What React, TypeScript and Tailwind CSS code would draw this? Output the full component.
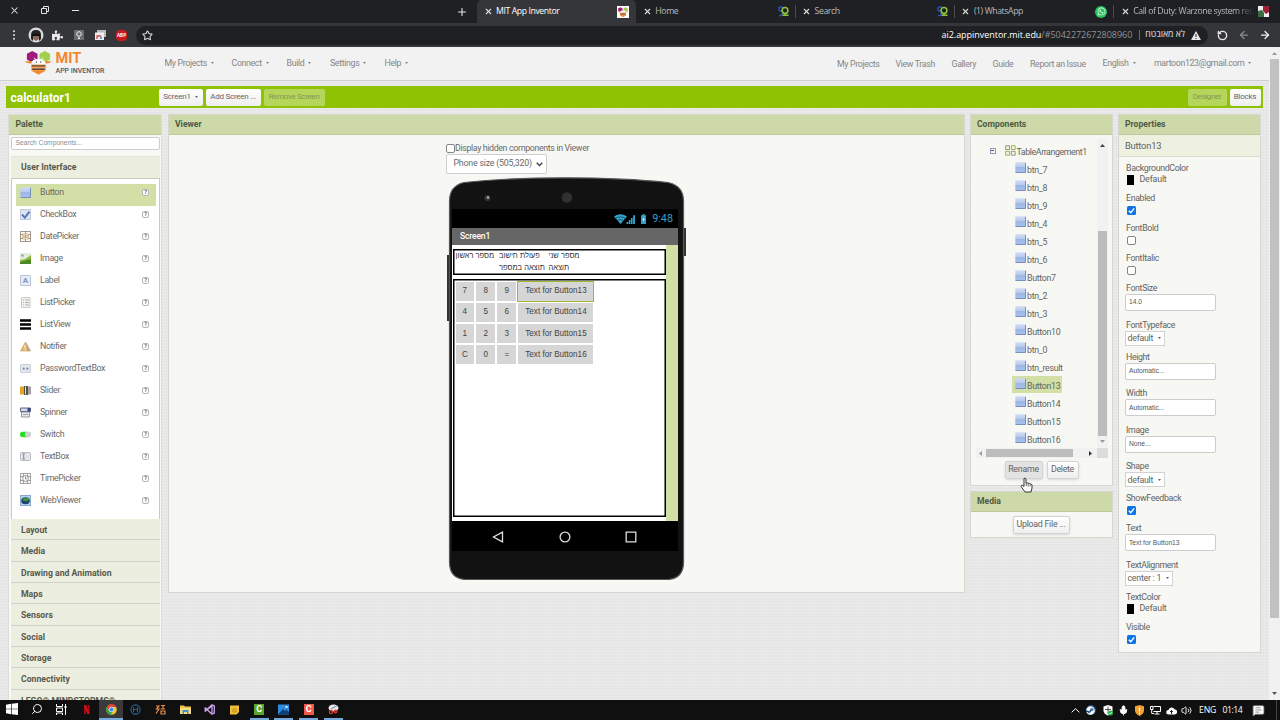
import type { ReactNode } from 'react'
import { ArrowLeft, ArrowRight, MessageSquareText, Mic, Minus, Plus, RotateCcw, Search, Star, Volume2, X } from 'lucide-react'
import { FaPuzzlePiece, FaSteam, FaWhatsapp } from 'react-icons/fa'

const paletteItems = [
  'Button', 'CheckBox', 'DatePicker', 'Image', 'Label', 'ListPicker', 'ListView', 'Notifier',
  'PasswordTextBox', 'Slider', 'Spinner', 'Switch', 'TextBox', 'TimePicker', 'WebViewer',
]

const drawers = [
  'Layout', 'Media', 'Drawing and Animation', 'Maps', 'Sensors', 'Social', 'Storage', 'Connectivity', 'LEGO® MINDSTORMS®',
]

const treeItems = [
  'btn_7', 'btn_8', 'btn_9', 'btn_4', 'btn_5', 'btn_6', 'Button7', 'btn_2', 'btn_3', 'Button10',
  'btn_0', 'btn_result', 'Button13', 'Button14', 'Button15', 'Button16',
]

type Property = { label: string; kind: 'color' | 'check' | 'input' | 'select'; value?: string; checked?: boolean }

const properties: Property[] = [
  { label: 'BackgroundColor', kind: 'color', value: 'Default' },
  { label: 'Enabled', kind: 'check', checked: true },
  { label: 'FontBold', kind: 'check' },
  { label: 'FontItalic', kind: 'check' },
  { label: 'FontSize', kind: 'input', value: '14.0' },
  { label: 'FontTypeface', kind: 'select', value: 'default' },
  { label: 'Height', kind: 'input', value: 'Automatic...' },
  { label: 'Width', kind: 'input', value: 'Automatic...' },
  { label: 'Image', kind: 'input', value: 'None...' },
  { label: 'Shape', kind: 'select', value: 'default' },
  { label: 'ShowFeedback', kind: 'check', checked: true },
  { label: 'Text', kind: 'input', value: 'Text for Button13' },
  { label: 'TextAlignment', kind: 'select', value: 'center : 1' },
  { label: 'TextColor', kind: 'color', value: 'Default' },
  { label: 'Visible', kind: 'check', checked: true },
]

const keypad = [
  ['7', '8', '9', 'Text for Button13'],
  ['4', '5', '6', 'Text for Button14'],
  ['1', '2', '3', 'Text for Button15'],
  ['C', '0', '=', 'Text for Button16'],
]

function BeeLogo({ className }: { className: string }) {
  return (
    <svg className={className} viewBox="0 0 30 25">
      <path d="M3 3.500L8.500.5l5.500 3v5.500l-3 3.500H8L3 9.500z" fill="#a01a7d" />
      <path d="M16 3.500L21.500.5l5.500 3v6l-5 3h-3l-3-3.500z" fill="#a3cf4d" />
      <path d="M.5 11.500l9-.5 1 3-7-1zM29 11.500l-8.500-.5-1 3 6.500-1z" fill="#f4872e" />
      <path d="M7.500 14.500q0-5.500 7.500-5.500t7.500 5.500z" fill="#fff" />
      <path d="M12 9.500L10.500 7.500M18 9.500l1.500-2" stroke="#fff" strokeWidth="1" />
      <circle cx="12.700" cy="12" r=".7" fill="#444" />
      <circle cx="17.300" cy="12" r=".7" fill="#444" />
      <path d="M7.500 14.500h15v6.500L15 24.800 7.500 21z" fill="#f4a15e" />
      <path d="M8 16h14M8.500 19.500h13" stroke="#5b4636" strokeWidth="1.400" />
      <path d="M8.500 21h13L15 24.800z" fill="#f4872e" />
    </svg>
  )
}

function SearchSiteIcon() {
  return (
    <svg className="h-[11px] w-[11px]" viewBox="0 0 11 11" fill="none">
      <path d="M5 1H2.500Q.8 1 .8 3T3 5t1.700 2T3 9.500H1" stroke="#2b4fc0" strokeWidth="1.400" />
      <circle cx="7" cy="4.500" r="2.900" stroke="#8fc43a" strokeWidth="1.500" />
      <path d="M4.500 9.300h6M7 7.500v2" stroke="#8fc43a" strokeWidth="1.500" />
    </svg>
  )
}

function Tab({ title, icon, active, last }: { title: string; icon: ReactNode; active?: boolean; last?: boolean }) {
  return (
    <div
      className={`flex w-[159.300px] shrink-0 items-center pr-[7px] pl-[6.500px] ${
        active ? 'rounded-t-[5px] bg-[#35363a] text-white' : 'text-[#b9babd]'
      }`}
    >
      <X className="h-[9px] w-[9px] shrink-0 text-[#dcdcdc]" strokeWidth={3} />
      <span
        className={`ml-[3.500px] flex-1 text-[8.700px] tracking-[-0.4px] whitespace-nowrap ${
          last ? '[mask-image:linear-gradient(90deg,#000_85%,transparent)]' : ''
        }`}
      >
        {title}
      </span>
      <span className="ml-[4px] shrink-0">{icon}</span>
    </div>
  )
}

function BrowserChrome() {
  return (
    <div className="h-[47px] shrink-0 bg-[#1f2023] font-['Open_Sans','Noto_Sans',sans-serif]">
      <div className="flex h-[23px]">
        <div className="flex w-[477px] shrink-0 items-center pb-[3px] text-[#e3e3e3]">
          <X className="ml-[9px] h-[11px] w-[11px]" strokeWidth={2.200} />
          <svg className="ml-[21px] h-[8px] w-[8px]" viewBox="0 0 8 8" fill="none" stroke="currentColor">
            <path d="M.5 2.500h5v5h-5zM2.500 2.500v-2h5v5h-2" />
          </svg>
          <Minus className="ml-[21px] h-[11px] w-[11px]" strokeWidth={2.200} />
          <Plus className="mt-[3px] ml-[375px] h-[12px] w-[12px] shrink-0" strokeWidth={2.200} />
        </div>
        <Tab
          title="MIT App Inventor"
          active
          icon={<span className="block h-[12px] w-[12px] bg-white"><BeeLogo className="h-[12px] w-[12px]" /></span>}
        />
        <Tab title="Home" icon={<SearchSiteIcon />} />
        <div className="my-[5px] -ml-px w-px bg-[#4b4c50]" />
        <Tab title="Search" icon={<SearchSiteIcon />} />
        <div className="my-[5px] -ml-px w-px bg-[#4b4c50]" />
        <Tab
          title="(1) WhatsApp"
          icon={
            <span className="flex h-[12px] w-[12px] items-center justify-center rounded-full bg-[#25c35a] text-white">
              <FaWhatsapp className="h-[9px] w-[9px]" />
            </span>
          }
        />
        <div className="my-[5px] -ml-px w-px bg-[#4b4c50]" />
        <Tab
          title="Call of Duty: Warzone system req"
          last
          icon={
            <svg className="h-[11px] w-[11px]" viewBox="0 0 11 11">
              <path d="M0 0h11v11H0z" fill="#eee" />
              <path d="M5 0h6v6L8 8 5 5z" fill="#9b2038" />
              <path d="M0 5l4-1 2 3v4H0z" fill="#3d6b43" />
            </svg>
          }
        />
      </div>
      <div className="flex h-[24px] items-center bg-[#35363a]">
        <div className="flex w-[136px] shrink-0 items-center">
          <svg className="ml-[12px] h-[10px] w-[4px]" viewBox="0 0 4 10" fill="#e3e3e3">
            <circle cx="2" cy="1.300" r="1" />
            <circle cx="2" cy="5" r="1" />
            <circle cx="2" cy="8.700" r="1" />
          </svg>
          <svg className="ml-[12px] h-[16px] w-[16px]" viewBox="0 0 16 16">
            <circle cx="8" cy="8" r="7.500" fill="#d8d8d8" />
            <path d="M3 8q0-5 5-5t5 5v4l-2 2V9H5v5l-2-2z" fill="#222" />
            <path d="M5 8h6v4l-3 2-3-2z" fill="#8c6a58" />
            <path d="M4 7h8v2H4z" fill="#111" />
          </svg>
          <FaPuzzlePiece className="ml-[8px] h-[11px] w-[11px] text-[#e8e8e8]" />
          <svg className="ml-[11px] h-[10px] w-[10px]" viewBox="0 0 10 10">
            <path d="M0 0h10v10H0z" fill="#6b6c6f" />
            <circle cx="5" cy="4" r="2.300" fill="none" stroke="#eee" />
            <path d="M4 7.500h2v1.500H4z" fill="#eee" />
          </svg>
          <svg className="ml-[11px] h-[10px] w-[11px]" viewBox="0 0 11 10">
            <path d="M2 0h9v7H2z" fill="#b9b9b9" />
            <path d="M0 2.500h9V10H0z" fill="#eee" />
            <path d="M2 9V6h4" stroke="#d04a3c" strokeWidth="1.300" fill="none" />
            <path d="M6 6.500V9" stroke="#3f7de0" strokeWidth="1.500" />
          </svg>
          <div className="ml-[10px] flex h-[11px] w-[11px] items-center justify-center rounded-[4px] bg-[#c91a1f] text-[4.500px] font-bold text-white">
            ABP
          </div>
        </div>
        <div className="flex h-[19px] w-[1072px] shrink-0 items-center rounded-full bg-[#1f2023]">
          <Star className="ml-[6px] h-[11px] w-[11px] text-[#dedede]" strokeWidth={2.200} />
          <div className="ml-auto text-[9px] tracking-[-0.03px] text-white">
            ai2.appinventor.mit.edu<span className="text-[#919397]">/#5042272672808960</span>
          </div>
          <div className="mr-[5px] ml-[7px] h-[10px] w-px bg-[#6a6b6e]" />
          <div dir="rtl" className="text-[8.700px] text-[#e3e3e3] font-['Open_Sans','DejaVu_Sans',sans-serif]">לא מאובטח</div>
          <svg className="mr-[7px] ml-[6px] h-[9px] w-[10px]" viewBox="0 0 10 9">
            <path d="M5 0l5 9H0z" fill="#e8e8e8" />
            <path d="M5 3v3M5 7v1" stroke="#1f2023" strokeWidth="1" />
          </svg>
        </div>
        <RotateCcw className="ml-[9px] h-[11px] w-[11px] text-[#e8e8e8]" strokeWidth={3} />
        <ArrowLeft className="ml-[10px] h-[12px] w-[12px] text-[#8a8b8e]" strokeWidth={2.500} />
        <ArrowRight className="ml-[9px] h-[12px] w-[12px] text-[#f2f2f2]" strokeWidth={2.500} />
      </div>
    </div>
  )
}

function Caret({ className = '' }: { className?: string }) {
  return (
    <svg className={`inline-block h-[2px] w-[3px] ${className}`} viewBox="0 0 3 2">
      <path d="M0 0h3L1.500 2z" fill="currentColor" />
    </svg>
  )
}

function TopNav() {
  const left = [
    { name: 'My Projects', w: 'w-[67px]' },
    { name: 'Connect', w: 'w-[55px]' },
    { name: 'Build', w: 'w-[43.500px]' },
    { name: 'Settings', w: 'w-[54.500px]' },
    { name: 'Help', w: 'w-[40px]' },
  ]
  const right = [
    { name: 'My Projects', w: 'w-[58.500px]' },
    { name: 'View Trash', w: 'w-[56px]' },
    { name: 'Gallery', w: 'w-[41px]' },
    { name: 'Guide', w: 'w-[37.500px]' },
    { name: 'Report an Issue', w: 'w-[72.500px]' },
  ]
  return (
    <div className="flex h-[34px] shrink-0 items-center border-b border-[#cfcfcf] bg-[#f2f2f2] text-[8.800px] tracking-[-0.35px] whitespace-nowrap text-[#858585]">
      <BeeLogo className="mb-[3px] ml-[24px] h-[25px] w-[29px]" />
      <div className="ml-[2.500px] w-[109px] font-bold tracking-normal">
        <div className="text-[14.500px] leading-[12px] text-[#f4872e]">MIT</div>
        <div className="pt-[2px] text-[7px] leading-[8px] font-medium text-[#555]">APP INVENTOR</div>
      </div>
      {left.map((m) => (
        <div key={m.name} className={`${m.w} shrink-0`}>
          {m.name}<Caret className="mb-[2px] ml-[4px]" />
        </div>
      ))}
      <div className="ml-auto flex pt-[2px]">
        {right.map((m) => (
          <div key={m.name} className={`${m.w} shrink-0`}>{m.name}</div>
        ))}
      </div>
      <div className="w-[51.500px]">English<Caret className="mb-[2px] ml-[4px]" /></div>
      <div className="w-[115px]">martoon123@gmail.com<Caret className="mb-[2px] ml-[4px]" /></div>
    </div>
  )
}

function ProjectBar() {
  const button = 'flex h-[17px] items-center justify-center rounded-[2px] text-[8px] whitespace-nowrap'
  return (
    <div className="mx-[6px] mt-[5px] flex h-[22px] shrink-0 items-center bg-[#8fc202]">
      <div className="w-[152.500px] pt-[2px] pl-[4.500px] text-[12px] font-bold text-white">calculator1</div>
      <div className={`${button} w-[44px] bg-gradient-to-b from-white to-[#eee] tracking-[-0.2px] text-[#666]`}>
        Screen1<Caret className="ml-[4px]" />
      </div>
      <div className={`${button} ml-[3px] w-[55px] bg-gradient-to-b from-white to-[#eee] tracking-[-0.25px] text-[#666]`}>Add Screen ...</div>
      <div className={`${button} ml-[3px] w-[61px] bg-[#b5d65b] tracking-[-0.35px] text-[#84984f]`}>Remove Screen</div>
      <div className={`${button} ml-auto w-[39px] bg-[#b5d65b] tracking-[-0.35px] text-[#84984f]`}>Designer</div>
      <div className={`${button} mr-[2.500px] ml-[3px] w-[31px] bg-gradient-to-b from-white to-[#eee] tracking-[-0.25px] text-[#666]`}>Blocks</div>
    </div>
  )
}

function BoxHeader({ title }: { title: string }) {
  return (
    <div className="h-[21px] shrink-0">
      <div className="flex h-[20px] items-center border-b border-[#bfc99c] bg-[#cdd9a8] pl-[6.500px] text-[8.600px] font-bold tracking-normal text-[#505a45]">
        {title}
      </div>
    </div>
  )
}

function ButtonGlyph() {
  return (
    <svg className="block h-[11px] w-[11px] shrink-0" viewBox="0 0 11 11">
      <defs>
        <linearGradient id="blueButton" x1="0" y1="0" x2="0" y2="1">
          <stop offset="0" stopColor="#cfdcf5" />
          <stop offset=".45" stopColor="#b6caee" />
          <stop offset=".5" stopColor="#9db7e6" />
          <stop offset="1" stopColor="#a9c0ea" />
        </linearGradient>
      </defs>
      <rect x=".3" y=".3" width="10.400" height="10.400" rx="1" fill="url(#blueButton)" />
      <path d="M.5 10.500h10V.8" fill="none" stroke="#7089b6" strokeWidth=".9" />
    </svg>
  )
}

function PaletteIcon({ name }: { name: string }) {
  if (name === 'Button') return <ButtonGlyph />
  const art: Record<string, ReactNode> = {
    CheckBox: (
      <>
        <rect x=".5" y=".5" width="10" height="10" fill="#dde5f2" stroke="#c3cbda" />
        <path d="M2 5.500l2.800 3.200 4.700-6" fill="none" stroke="#5878b8" strokeWidth="1.900" />
      </>
    ),
    DatePicker: (
      <>
        <path d="M.5.5h10v10H.5zM.5 3.500h10M5.500.5v10M.5 7.500h10" fill="#fffaf2" stroke="#776c60" strokeWidth=".7" />
        <path d="M2.500 3h6v5h-6z" fill="#f7ead6" stroke="#b8966c" strokeWidth=".6" />
        <path d="M4 4v3M5.500 4v3M7 4v3" stroke="#8a7860" strokeWidth=".6" />
      </>
    ),
    Image: (
      <>
        <path d="M0 0h11v11H0z" fill="#e4ebdf" />
        <path d="M0 7l5-1 6-4v9H0z" fill="#8dbb45" />
        <path d="M0 9l11-3v5H0z" fill="#4d8724" />
        <circle cx="2.500" cy="2.500" r="1.300" fill="#9aa79a" />
      </>
    ),
    Label: (
      <>
        <rect x=".5" y=".5" width="10" height="10" rx=".5" fill="#e6ecf5" stroke="#b9c4d6" />
        <text x="5.500" y="8.400" textAnchor="middle" fontSize="8" fontWeight="bold" fill="#7f96bd">A</text>
      </>
    ),
    ListPicker: (
      <>
        <rect x="1.500" y=".5" width="8.500" height="10" rx=".5" fill="#f3f3f0" stroke="#bcbcb8" strokeWidth=".8" />
        <path d="M3 3h1M5 3h4M3 5.500h1M5 5.500h4M3 8h1M5 8h4" stroke="#aaa9a2" strokeWidth=".9" />
      </>
    ),
    ListView: <path d="M0 1.500h11M0 5.500h11M0 9.500h11" stroke="#000" strokeWidth="2.300" />,
    Notifier: (
      <>
        <path d="M5.500 1l5 9H.5z" fill="#e9b667" stroke="#c99750" strokeWidth=".6" />
        <path d="M6 1.500L10.500 10H7z" fill="#b5a68d" />
        <path d="M5 4v3.500M5 8.300v1" stroke="#fff3d0" strokeWidth="1" />
      </>
    ),
    PasswordTextBox: (
      <>
        <rect x=".5" y="1.500" width="10" height="8" rx=".5" fill="#e4e8ee" stroke="#cbd0d8" />
        <circle cx="3.700" cy="5.700" r="1.100" fill="#7688a8" />
        <circle cx="7.400" cy="5.700" r="1.100" fill="#7688a8" />
      </>
    ),
    Slider: (
      <>
        <path d="M0 1.500h4v8H0z" fill="#e5a526" />
        <path d="M4 1h4v9H4z" fill="#55524c" />
        <path d="M5 1.500h1v8H5z" fill="#ddd" />
        <path d="M8 1.500h3v8H8z" fill="#a4a29c" />
      </>
    ),
    Spinner: (
      <>
        <path d="M.5 1h10v3.500H.5z" fill="#d4d9e4" stroke="#4c5a7c" strokeWidth=".9" />
        <path d="M7.500 1h3v3.500h-3z" fill="#33477c" />
        <path d="M1.500 5h8v5h-8z" fill="#e6e8ec" stroke="#7c8494" strokeWidth=".8" />
        <path d="M3 7.500h5" stroke="#9aa1af" />
      </>
    ),
    Switch: (
      <>
        <rect x="0" y="2.800" width="9" height="5.500" rx="2.700" fill="#1fdf1f" />
        <circle cx="8" cy="5.500" r="3.100" fill="#cfcfcf" />
      </>
    ),
    TextBox: (
      <>
        <rect x=".5" y="1.500" width="10" height="8" rx="1" fill="#e3e5e9" stroke="#b7bac0" />
        <path d="M2.500 3h2.400M2.500 8h2.400M3.700 3v5" stroke="#6e7480" strokeWidth=".8" />
      </>
    ),
    TimePicker: (
      <>
        <path d="M.5.5h10v10H.5zM.5 3.500h10M3.500.5v10M7.500.5v10M.5 7.500h10" fill="#fafafa" stroke="#7f7f7f" strokeWidth=".7" />
        <circle cx="5.500" cy="5.500" r="2.900" fill="#fff" stroke="#666" strokeWidth=".7" />
        <path d="M5.500 3.800v2h1.300" fill="none" stroke="#555" strokeWidth=".7" />
      </>
    ),
    WebViewer: (
      <>
        <rect x=".5" y=".5" width="10" height="10" fill="#b9d1ee" stroke="#8aa8cf" />
        <ellipse cx="5.500" cy="5.700" rx="4.300" ry="3.500" fill="#1d466c" />
        <path d="M2 5q2-3 5-2.500t2.500 2.500L6 6.500z" fill="#3f9340" />
      </>
    ),
  }
  return <svg className="block h-[11px] w-[11px] shrink-0" viewBox="0 0 11 11">{art[name]}</svg>
}

function Palette() {
  return (
    <div className="flex h-[587px] w-[154px] shrink-0 flex-col border border-[#dcdcd8] bg-[#f8f9f5] text-[8.800px] text-[#6a6a6a]">
      <BoxHeader title="Palette" />
      <div className="mx-[1.500px] mt-px flex h-[13px] shrink-0 items-center rounded-[2px] border border-[#ccc] bg-white pl-[4px] font-['Liberation_Sans',sans-serif] text-[6.700px] text-[#8c8c8c]">
        Search Components...
      </div>
      <div className="mx-[1.500px] mt-[6px] flex h-[23px] shrink-0 items-center border-t border-b border-[#c9cbc0] border-t-[#e3e5da] bg-[#ecefdf] pt-px pl-[10.500px] text-[8.700px] font-bold text-[#58594f]">
        User Interface
      </div>
      <div className="mx-[1.500px] h-[340px] shrink-0 border-x border-[#c9c9c9] bg-white pt-[5px] pr-[2.500px] pl-[4.500px]">
        {paletteItems.map((name, i) => (
          <div key={name} className={`flex h-[22px] items-start pl-[4px] ${i === 0 ? 'bg-[#d2dfa6]' : ''}`}>
            <span className="pt-[3px]"><PaletteIcon name={name} /></span>
            <span className="ml-[9px] pt-[1.500px] leading-[13px] tracking-[-0.35px]">{name}</span>
            <span className="mt-[5px] mr-[7px] ml-auto flex h-[7px] w-[7px] items-center justify-center rounded-[2px] border border-[#b5b5b5] bg-white text-[5.500px] leading-none font-bold text-[#666]">
              ?
            </span>
          </div>
        ))}
      </div>
      <div className="mx-[1.500px] min-h-0 flex-1 overflow-hidden">
        {drawers.map((name) => (
          <div key={name} className="flex h-[21.330px] items-center border-b-[1.500px] border-[#cfd1ca] bg-[#ecefdf] pt-[3px] pl-[10.500px] text-[8.700px] font-bold text-[#58594f]">
            {name}
          </div>
        ))}
      </div>
    </div>
  )
}

function Phone() {
  return (
    <div className="relative ml-[278.500px] h-[403px] w-[239px] pt-[32px] pl-[5px] tracking-normal">
      {/* device body with the side keys */}
      <svg className="absolute inset-0 h-[403px] w-[239px]" viewBox="0 0 239 403">
        <path d="M0 78h3v66H0zM236 51h3v28h-3z" fill="#333" />
        <path d="M2.500 24Q2.500 9 17 5.500 60 .8 119 .8T221 5.500Q236.500 9 236.500 24V385Q236.500 402.500 219 402.500H20Q2.500 402.500 2.500 385z" fill="#121212" stroke="#55585a" strokeWidth="1.200" />
        <circle cx="40.500" cy="21" r="3" fill="#34383c" />
        <circle cx="41" cy="20.500" r="1.200" fill="#a8afb5" />
        <circle cx="120" cy="20.500" r="5.300" fill="#303030" />
      </svg>
      <div className="relative w-[226px] bg-black">
        <div className="flex h-[19px] items-center justify-end pr-[5px] text-[#33a1c9]">
          <svg className="h-[10px] w-[34px]" viewBox="0 0 34 10" fill="#33a1c9">
            <path d="M0 2.500Q6.500-2 13 2.500L6.500 10z" />
            <path d="M1.500 4.500Q6.500 1.200 11.500 4.500M3.300 6.500q3.200-2 6.400 0" fill="none" stroke="#0b2e3b" strokeWidth=".6" />
            <path d="M12.500 10h1.700V8h-1.700zM14.700 10h1.700V6h-1.700zM16.900 10h1.700V4h-1.700zM19.100 10H21V1.200h-1.900z" />
            <path d="M27 1.200h1.500V0h2v1.200H32V10h-5z" />
            <path d="M29.800 3l-1.300 3h1l-.3 2 1.500-3h-1z" fill="#fff" />
          </svg>
          <span className="ml-[4px] pt-px text-[10.800px] leading-none">9:48</span>
        </div>
        <div className="flex h-[17px] items-center bg-[#666] pb-px pl-[8px] text-[8.600px] font-medium tracking-[-0.2px] text-white">Screen1</div>
        <div className="flex h-[276px] bg-[#d2dfa6]">
          <div className="w-[214px] bg-white pt-[4px] pl-px">
            <div className="grid h-[26px] grid-cols-[43.500px_49.500px_auto] grid-rows-[12px_12px] border border-black pl-[1.500px] font-['Liberation_Sans','DejaVu_Sans',sans-serif] text-[7.500px] leading-[12px] whitespace-nowrap text-[#333] shadow-[inset_0_0_0_0.500px_#000]">
              <span>מספר ראשון</span>
              <span>פעולת חישוב</span>
              <span>מספר שני</span>
              <span className="col-start-2">תוצאה במספר</span>
              <span>תוצאה</span>
            </div>
            <div className="mt-[4px] flex h-[238px] flex-col gap-[2.330px] border border-black pt-[1.500px] pl-[1.500px] font-['Liberation_Sans',sans-serif] text-[8.150px] text-[#444] shadow-[inset_0_0_0_0.500px_#000]">
              {keypad.map((row) => (
                <div key={row[3]} className="flex h-[19px] gap-[2.300px] whitespace-nowrap">
                  {row.map((key) => (
                    <div
                      key={key}
                      className={`flex items-center justify-center bg-[#d6d6d6] ${key.length > 1 ? 'w-[75px]' : 'w-[18.700px]'} ${
                        key === 'Text for Button13' ? 'shadow-[0_0_0_1px_#9cba2e]' : ''
                      }`}
                    >
                      {key}
                    </div>
                  ))}
                </div>
              ))}
            </div>
          </div>
        </div>
        <div className="flex h-[30px] items-center justify-between pt-[2px] pr-[41px] pl-[40px]">
          <svg className="h-[12px] w-[12px]" viewBox="0 0 12 12" fill="none" stroke="#ddd" strokeWidth="1.300">
            <path d="M10.500 1.200v9.600L1.500 6z" />
          </svg>
          <svg className="h-[12px] w-[12px]" viewBox="0 0 12 12" fill="none" stroke="#ddd" strokeWidth="1.300">
            <circle cx="6" cy="6" r="4.900" />
          </svg>
          <svg className="h-[12px] w-[12px]" viewBox="0 0 12 12" fill="none" stroke="#ddd" strokeWidth="1.300">
            <path d="M1.200 1.200h9.600v9.600H1.200z" />
          </svg>
        </div>
      </div>
    </div>
  )
}

function Viewer() {
  return (
    <div className="ml-[5.500px] h-[479px] w-[797px] shrink-0 border border-[#d6d8cf] bg-[#f7f8f3] text-[8.800px] tracking-[-0.35px] text-[#6a6a6a]">
      <BoxHeader title="Viewer" />
      <div className="mt-[6px] ml-[277.500px] flex h-[12px] items-center">
        <Checkbox />
        <span className="pt-px whitespace-nowrap">Display hidden components in Viewer</span>
      </div>
      <div className="mb-[3px] ml-[277.500px] flex h-[20px] w-[101px] items-center justify-between rounded-[2px] border border-[#d0d0d0] bg-white pr-[3px] pl-[6.500px] tracking-[-0.2px] whitespace-nowrap">
        Phone size (505,320)
        <svg className="h-[5px] w-[7px]" viewBox="0 0 7 5" fill="none" stroke="#444" strokeWidth="1.400">
          <path d="M.7.8l2.800 2.800L6.300.8" />
        </svg>
      </div>
      <Phone />
    </div>
  )
}

function Checkbox({ checked }: { checked?: boolean }) {
  if (!checked) {
    return <span className="block h-[9px] w-[9px] shrink-0 rounded-[2px] border border-[#858585] bg-white" />
  }
  return (
    <svg className="block h-[9px] w-[9px] shrink-0" viewBox="0 0 9 9">
      <rect width="9" height="9" rx="1.500" fill="#0d74e7" />
      <path d="M1.800 4.700l2 1.900 3.400-4.200" fill="none" stroke="#fff" strokeWidth="1.400" />
    </svg>
  )
}

function ArrowGlyph({ className = '' }: { className?: string }) {
  return (
    <svg className={`h-[3px] w-[5px] shrink-0 ${className}`} viewBox="0 0 5 3">
      <path d="M0 3h5L2.500 0z" fill="currentColor" />
    </svg>
  )
}

function Components() {
  const button = 'flex h-[18px] items-center justify-center rounded-[2px] border border-[#d3d3d3] shadow-sm whitespace-nowrap'
  return (
    <div className="ml-[5px] w-[143px] shrink-0 text-[8.800px] tracking-[-0.3px] text-[#626262]">
      <div className="h-[372px] border border-[#d6d8cf] bg-[#f7f8f3]">
        <BoxHeader title="Components" />
        <div className="mt-[3px] flex h-[309px] pr-[4px]">
          <div className="w-[124px] pt-[3px]">
            <div className="flex h-[18px] items-center pb-px">
              <span className="ml-[19px] flex h-[6px] w-[6px] shrink-0 items-center justify-center border border-[#8f9bb8]">
                <span className="h-px w-[3px] bg-[#4a5c8c]" />
              </span>
              <svg className="ml-[9px] h-[11px] w-[11px] shrink-0" viewBox="0 0 11 11" fill="#f2f5e4" strokeWidth=".9">
                <path d="M.7.7h3.800v3.800H.7zM6.300 6.300h3.900v3.900H6.300z" stroke="#8a8f74" />
                <path d="M6.300.7h3.900v3.800H6.300zM.7 6.300h3.800v3.900H.7z" stroke="#93b040" />
              </svg>
              <span className="ml-px pt-[4px] tracking-[-0.4px]">TableArrangement1</span>
            </div>
            {treeItems.map((name) => (
              <div key={name} className="flex h-[18px] pl-[41px]">
                <div className={`flex h-[17px] items-center pr-[2px] pl-[3px] ${name === 'Button13' ? 'bg-[#d2dfa6]' : ''}`}>
                  <span className="pb-[3px]"><ButtonGlyph /></span>
                  <span className="ml-[1.500px] pt-[5px]">{name}</span>
                </div>
              </div>
            ))}
          </div>
          <div className="ml-[2px] flex w-[11px] flex-col items-center bg-[#f1f1f1] py-[5px] text-[#444]">
            <ArrowGlyph />
            <div className="mt-[84px] h-[205px] w-[9px] bg-[#bdbdbd]" />
            <ArrowGlyph className="mt-auto rotate-180 text-[#999]" />
          </div>
        </div>
        <div className="ml-[5px] flex h-[10px] w-[132px] items-center bg-[#f1f1f1]">
          <ArrowGlyph className="ml-[2px] -rotate-90 text-[#999]" />
          <div className="ml-[3.500px] h-[8px] w-[87px] bg-[#bdbdbd]" />
          <ArrowGlyph className="ml-[15px] rotate-90 text-[#333]" />
          <div className="ml-auto h-[10px] w-[11px] bg-[#dcdcdc]" />
        </div>
        <div className="relative mt-[3px] ml-[34px] flex gap-[4px]">
          <div className={`${button} w-[38px] border-[#bdbdbd] bg-[#e3e3e3] tracking-[-0.25px]`}>Rename</div>
          <div className={`${button} w-[32px] bg-gradient-to-b from-white to-[#efefef]`}>Delete</div>
          {/* hand pointer over the rename button */}
          <svg className="absolute top-[16px] left-[15px] h-[16px] w-[13px]" viewBox="0 0 13 16">
            <path d="M4 1.500q1.500-1 2 .5v4q1.500-.8 2 .4 1.500-.6 2 .6 1.700-.3 2 1v3L11 15H5L1.200 9.600q-.3-1.700 1.500-1.200L4 9.500z" fill="#fff" stroke="#222" strokeWidth=".9" strokeLinejoin="round" />
            <path d="M6.200 6v3M8.200 7v2.500M10.200 7.500v2" stroke="#222" strokeWidth=".7" />
          </svg>
        </div>
      </div>
      <div className="mt-[5px] h-[47px] border border-[#d6d8cf] bg-[#f7f8f3]">
        <BoxHeader title="Media" />
        <div className={`${button} mt-[3px] ml-[42px] w-[57px] bg-gradient-to-b from-white to-[#efefef] tracking-[-0.25px]`}>Upload File ...</div>
      </div>
    </div>
  )
}

const blockHeight = { color: 'h-[30px]', check: 'h-[30px]', input: 'h-[36.600px]', select: 'h-[32px]' }

function PropertyRow({ prop }: { prop: Property }) {
  return (
    <div className={`${blockHeight[prop.kind]} pl-[6px]`}>
      <div className="ml-[1.500px] h-[12px] leading-[12px]">{prop.label}</div>
      {prop.kind === 'color' && (
        <div className="ml-[2px] flex h-[12px] items-center">
          <span className="h-[10px] w-[7px] bg-black" />
          <span className="ml-[6px] tracking-[-0.15px]">{prop.value}</span>
        </div>
      )}
      {prop.kind === 'check' && <div className="pt-[2px] pl-[2px]"><Checkbox checked={prop.checked} /></div>}
      {prop.kind === 'input' && (
        <div className="flex h-[17px] w-[91px] items-center rounded-[2px] border border-[#ccc] bg-white pl-[3.500px] font-['Liberation_Sans',sans-serif] text-[6.700px] tracking-normal text-[#555]">
          {prop.value}
        </div>
      )}
      {prop.kind === 'select' && (
        <div className="inline-flex h-[15px] items-center border border-[#d2d2d2] bg-white pr-[3px] pl-[2px] align-top leading-[12px] tracking-[-0.25px]">
          {prop.value}<Caret className="ml-[4.500px]" />
        </div>
      )}
    </div>
  )
}

function PropertiesPanel() {
  return (
    <div className="ml-[5px] h-[539px] w-[143px] shrink-0 border border-[#d6d8cf] bg-[#f7f8f3] text-[8.800px] tracking-[-0.35px] text-[#626262]">
      <BoxHeader title="Properties" />
      <div className="-mt-px mb-[5px] flex h-[22px] items-center border-b border-[#dadccf] bg-[#eef1e0] pl-[6.500px] text-[9.300px] tracking-[-0.2px]">Button13</div>
      {properties.map((p) => <PropertyRow key={p.label} prop={p} />)}
    </div>
  )
}

function TaskSlot({ children, open, active }: { children: ReactNode; open?: boolean; active?: boolean }) {
  return (
    <div className={`flex h-full w-[24.700px] shrink-0 items-center justify-center ${active ? 'bg-[#3a3a3a]' : ''}`}>
      <div className={`flex h-full items-center justify-center border-b-2 ${active ? 'w-full' : 'w-[19px]'} ${open || active ? 'border-[#76a9dc]' : 'border-transparent'}`}>
        {children}
      </div>
    </div>
  )
}

function Taskbar() {
  const icon = 'h-[11px] w-[11px]'
  return (
    <div className="flex h-[20px] shrink-0 items-center bg-[#101010] text-white">
      <TaskSlot>
        <svg className="h-[12px] w-[12px]" viewBox="0 0 11 11" fill="#fff">
          <path d="M0 1.500L4.700.8v4.400H0zM5.300.7L11 0v5.200H5.300zM0 5.800h4.700v4.400L0 9.500zM5.300 5.800H11V11l-5.700-.7z" />
        </svg>
      </TaskSlot>
      <TaskSlot><Search className="h-[12px] w-[12px]" strokeWidth={2} transform="scale(-1 1)" /></TaskSlot>
      <TaskSlot>
        <svg className={icon} viewBox="0 0 11 11" fill="none" stroke="#fff">
          <path d="M.5 0v2.500h6V0M.5 4h6v3.500h-6zM.5 11V9h6v2M9.500 0v11" />
          <path d="M8.500 3h2" strokeWidth="2" />
        </svg>
      </TaskSlot>
      <TaskSlot>
        <svg className={icon} viewBox="0 0 11 11">
          <path d="M3 1h2v9H3zM6.500 1h2v9h-2z" fill="#a80d12" />
          <path d="M3 1h2l3.500 9h-2z" fill="#e50914" />
        </svg>
      </TaskSlot>
      <TaskSlot active>
        <svg className={icon} viewBox="0 0 11 11">
          <circle cx="5.500" cy="5.500" r="5.300" fill="#e9c52c" />
          <path d="M.8 3A5.300 5.300 0 0 1 10.300 3H5.500l-2.200 3.800z" fill="#d94335" />
          <path d="M.8 3a5.300 5.300 0 0 0 4 7.800L7.200 7 3.500 7z" fill="#30a14e" />
          <circle cx="5.500" cy="5.500" r="2.400" fill="#4285f4" stroke="#fff" strokeWidth=".7" />
        </svg>
      </TaskSlot>
      <TaskSlot>
        <svg className={icon} viewBox="0 0 11 11" fill="none" stroke="#2a6494" strokeWidth="1.100">
          <circle cx="5.500" cy="5.500" r="4.600" />
          <path d="M3.500 3v5M7.500 3v5M3.500 5.500h4" />
        </svg>
      </TaskSlot>
      <TaskSlot>
        <svg className={icon} viewBox="0 0 11 11" fill="none" stroke="#e88a4a" strokeWidth="1.200">
          <path d="M1 2h3L1.500 5H4L1 9.500M6 1.500h4M8 1.500V5M5.500 5H10M6 7h4v3H6z" />
        </svg>
      </TaskSlot>
      <TaskSlot>
        <svg className={icon} viewBox="0 0 11 11">
          <path d="M0 1.500h4l1 1h6V10H0z" fill="#f0c24b" />
          <path d="M0 4h11v6H0z" fill="#f8d978" />
          <path d="M2.500 6h6v4H7V8H4v2H2.500z" fill="#3c92d4" />
        </svg>
      </TaskSlot>
      <TaskSlot>
        <svg className={icon} viewBox="0 0 11 11" fill="none" stroke="#c9a3ec" strokeWidth="1.300">
          <path d="M8 .8l2.300 1v7.400L8 10.200 1.200 3.800v3.500L8 .8zM1.200 7.300L8 2v7" strokeLinejoin="round" />
        </svg>
      </TaskSlot>
      <TaskSlot>
        <svg className={icon} viewBox="0 0 11 11">
          <path d="M1 1.500h9V8l-2.500 2.500H1z" fill="#f2bd3a" />
          <path d="M4 5h3v3H4z" fill="none" stroke="#b27d14" strokeWidth=".8" />
        </svg>
      </TaskSlot>
      <TaskSlot open>
        <span className="flex h-[11px] w-[10px] items-center justify-center bg-[#5aa52a] text-[9px] leading-none font-bold">C</span>
      </TaskSlot>
      <TaskSlot open>
        <svg className={icon} viewBox="0 0 11 11">
          <path d="M0 .5h11v10H0z" fill="#2f8be0" />
          <path d="M0 10.500L5 5l2 2 1.500-1.500L11 8v2.500z" fill="#123e78" />
          <path d="M7.500 2h2v2h-2z" fill="#d4eafc" />
        </svg>
      </TaskSlot>
      <TaskSlot open>
        <span className="flex h-[11px] w-[10px] items-center justify-center bg-[#ee5a45] text-[9px] leading-none font-bold">C</span>
      </TaskSlot>
      <TaskSlot open>
        <svg className={icon} viewBox="0 0 11 11">
          <ellipse cx="5.500" cy="4" rx="5" ry="3.500" fill="#e9e9ef" />
          <path d="M3 5l6-3.500" stroke="#8a93a4" strokeWidth="1.200" />
          <circle cx="3" cy="8" r="1.600" fill="none" stroke="#d33f31" strokeWidth="1.200" />
          <circle cx="7.500" cy="7.500" r="1.400" fill="none" stroke="#d33f31" strokeWidth="1.200" />
        </svg>
      </TaskSlot>
      <div className="ml-auto flex h-full items-center font-['Open_Sans','Noto_Sans',sans-serif] text-[8.700px]">
        <svg className="h-[5px] w-[9px]" viewBox="0 0 9 5" fill="none" stroke="#fff"><path d="M.7 4.300L4.500.7l3.800 3.600" /></svg>
        <span className="ml-[6px] flex h-[10px] w-[10px] items-center justify-center rounded-full bg-[#1a4a86]">
          <FaSteam className="h-[9px] w-[9px] text-white" />
        </span>
        <svg className="ml-[7px] h-[11px] w-[10px]" viewBox="0 0 10 11">
          <path d="M5 0l4.500 1.500V6Q9 9 5 10.500 1 9 .5 6V1.500z" fill="#fff" />
          <path d="M5 1.500v7M2 4.500h6" stroke="#111" strokeWidth=".7" />
          <circle cx="7.500" cy="8" r="2.500" fill="#2bb14c" />
          <path d="M6.300 8l1 1 1.500-2" fill="none" stroke="#fff" strokeWidth=".7" />
        </svg>
        <Mic className="ml-[5px] h-[11px] w-[11px] fill-white" strokeWidth={2} />
        <svg className="ml-[6.500px] h-[11px] w-[9px]" viewBox="0 0 9 11">
          <path d="M4.500 0L9 1.300V6Q8.500 9 4.500 11 .5 9 0 6V1.300z" fill="#f0a02e" />
          <path d="M4.500 2.500v4M4.500 7.500V9" stroke="#fff" strokeWidth="1.200" />
        </svg>
        <svg className="ml-[6px] h-[10px] w-[11px]" viewBox="0 0 11 10" fill="none" stroke="#fff">
          <path d="M3.500 1.500h7v5h-7M7 6.500v2.500M4.500 9h5M.5 1.500h2.500v3H.5zM1.700 4.500V8.500H4" />
        </svg>
        <svg className="ml-[5px] h-[9px] w-[11px]" viewBox="0 0 11 9">
          <path d="M2.500 8.500a2.300 2.300 0 0 1 0-4.600A3.200 3.200 0 0 1 8.500 3.300a2.600 2.600 0 0 1 0 5.200z" fill="#fff" />
          <path d="M5.500 8V4.500M4 6l1.500-1.500L7 6" fill="none" stroke="#111" strokeWidth=".9" />
        </svg>
        <Volume2 className="ml-[4px] h-[11px] w-[11px]" strokeWidth={2} />
        <span className="ml-[7px] w-[23.500px] pt-px tracking-[-0.2px]">ENG</span>
        <span className="w-[28.500px] pt-px tracking-[-0.5px]">01:14</span>
        <MessageSquareText className="mr-[11px] ml-px h-[13px] w-[13px] fill-white stroke-[#777]" strokeWidth={1.500} />
        <div className="mr-[3px] h-full w-px bg-[#444]" />
      </div>
    </div>
  )
}

export default function App() {
  return (
    <div className="flex h-[720px] w-[1280px] flex-col overflow-hidden font-['Roboto',sans-serif]">
      <BrowserChrome />
      <div className="flex h-[653px] shrink-0">
        <div className="flex w-[1269px] shrink-0 flex-col overflow-hidden bg-[#e7e7e7] bg-[repeating-linear-gradient(0deg,rgba(255,255,255,0.2)_0_1px,transparent_1px_3px),repeating-linear-gradient(90deg,rgba(0,0,0,0.012)_0_1px,transparent_1px_3px)]">
          <TopNav />
          <ProjectBar />
          <div className="mt-[6px] flex items-start pl-[8px]">
            <Palette />
            <Viewer />
            <Components />
            <PropertiesPanel />
          </div>
        </div>
        <div className="flex w-[11px] flex-col items-center bg-[#f1f1f1] py-[5px] text-[#555]">
          <ArrowGlyph className="text-[#999]" />
          <div className="mt-[4px] h-[559px] w-[9px] bg-[#c1c1c1]" />
          <ArrowGlyph className="mt-auto rotate-180" />
        </div>
      </div>
      <Taskbar />
    </div>
  )
}
